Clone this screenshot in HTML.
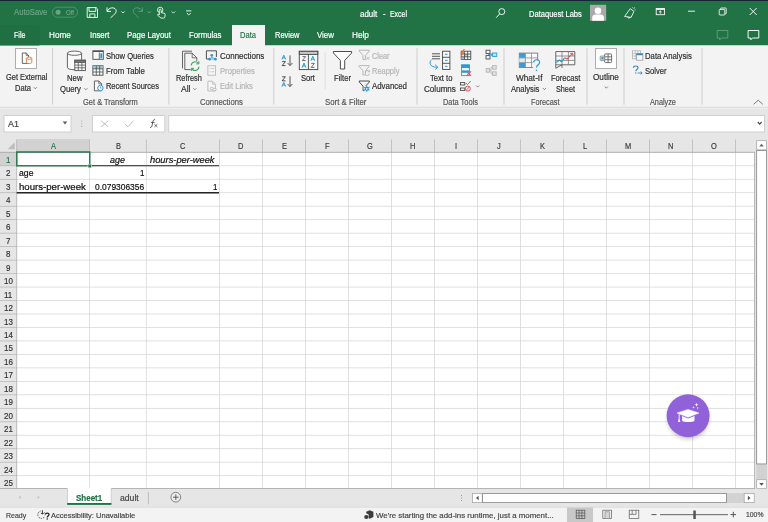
<!DOCTYPE html>
<html><head><meta charset="utf-8"><title>adult - Excel</title>
<style>
html,body{margin:0;padding:0;}
body{width:768px;height:522px;overflow:hidden;position:relative;background:#fff;
font-family:"Liberation Sans",sans-serif;}
.r{position:absolute;}
.t{position:absolute;white-space:pre;line-height:12px;transform-origin:0 50%;-webkit-text-stroke:0.18px currentColor;}
svg.ov{position:absolute;left:0;top:0;}
#tx{position:absolute;left:0;top:0;width:768px;height:522px;will-change:transform;}
</style></head><body>
<svg class="ov" width="768" height="522" viewBox="0 0 768 522">
<defs><linearGradient id="shade" x1="0" y1="0" x2="0" y2="1"><stop offset="0" stop-color="#dadada"/><stop offset="1" stop-color="#e6e6e6"/></linearGradient></defs>
<rect x="0.00" y="0.00" width="768.00" height="45.50" fill="#217346"/>
<rect x="0.00" y="0.00" width="768.00" height="1.00" fill="#152536"/>
<rect x="0.00" y="45.50" width="768.00" height="61.10" fill="#f3f3f3"/>
<rect x="0.00" y="106.60" width="768.00" height="1.80" fill="url(#shade)"/>
<rect x="0.00" y="25.00" width="39.50" height="20.50" fill="#1f6f43"/>
<rect x="232.00" y="25.00" width="33.00" height="21.00" fill="#f3f3f3"/>
<rect x="52.00" y="48.20" width="1.00" height="56.40" fill="#cecece"/>
<rect x="168.40" y="48.20" width="1.00" height="56.40" fill="#cecece"/>
<rect x="273.30" y="48.20" width="1.00" height="56.40" fill="#cecece"/>
<rect x="416.50" y="48.20" width="1.00" height="56.40" fill="#cecece"/>
<rect x="503.50" y="48.20" width="1.00" height="56.40" fill="#cecece"/>
<rect x="586.50" y="48.20" width="1.00" height="56.40" fill="#cecece"/>
<rect x="623.50" y="48.20" width="1.00" height="56.40" fill="#cecece"/>
<rect x="701.50" y="48.20" width="1.00" height="56.40" fill="#cecece"/>
<rect x="324.70" y="52.00" width="0.80" height="37.00" fill="#dadada"/>
<rect x="15.50" y="48.50" width="21.00" height="20.00" fill="#fefefe" stroke="#adadad" stroke-width="1.00"/>
<rect x="595.50" y="48.50" width="21.00" height="20.00" fill="#fefefe" stroke="#adadad" stroke-width="1.00"/>
<rect x="0.00" y="108.50" width="768.00" height="30.50" fill="#e6e6e6"/>
<rect x="4.00" y="115.50" width="67.00" height="16.50" fill="#fff" stroke="#d0d0d0" stroke-width="1.00"/>
<rect x="92.50" y="115.50" width="72.30" height="16.50" fill="#fff" stroke="#d0d0d0" stroke-width="1.00"/>
<rect x="168.70" y="115.50" width="595.80" height="16.50" fill="#fff" stroke="#d0d0d0" stroke-width="1.00"/>
<rect x="0.00" y="139.00" width="768.00" height="349.85" fill="#e6e6e6"/>
<rect x="16.80" y="152.30" width="737.80" height="336.55" fill="#fff"/>
<rect x="16.80" y="139.00" width="72.80" height="13.30" fill="#d2d2d2"/>
<rect x="0.00" y="152.30" width="16.80" height="13.47" fill="#d2d2d2"/>
<path d="M14.7 142.3 V149.3 H7.7 Z" fill="#bdbdbd"/>
<rect x="89.24" y="139.50" width="0.72" height="12.80" fill="#b4b4b4"/>
<rect x="89.24" y="152.30" width="0.72" height="336.55" fill="#d5d5d5"/>
<rect x="145.94" y="139.50" width="0.72" height="12.80" fill="#b4b4b4"/>
<rect x="145.94" y="152.30" width="0.72" height="336.55" fill="#d5d5d5"/>
<rect x="219.04" y="139.50" width="0.72" height="12.80" fill="#b4b4b4"/>
<rect x="219.04" y="152.30" width="0.72" height="336.55" fill="#d5d5d5"/>
<rect x="262.04" y="139.50" width="0.72" height="12.80" fill="#b4b4b4"/>
<rect x="262.04" y="152.30" width="0.72" height="336.55" fill="#d5d5d5"/>
<rect x="305.04" y="139.50" width="0.72" height="12.80" fill="#b4b4b4"/>
<rect x="305.04" y="152.30" width="0.72" height="336.55" fill="#d5d5d5"/>
<rect x="348.04" y="139.50" width="0.72" height="12.80" fill="#b4b4b4"/>
<rect x="348.04" y="152.30" width="0.72" height="336.55" fill="#d5d5d5"/>
<rect x="391.04" y="139.50" width="0.72" height="12.80" fill="#b4b4b4"/>
<rect x="391.04" y="152.30" width="0.72" height="336.55" fill="#d5d5d5"/>
<rect x="434.04" y="139.50" width="0.72" height="12.80" fill="#b4b4b4"/>
<rect x="434.04" y="152.30" width="0.72" height="336.55" fill="#d5d5d5"/>
<rect x="477.04" y="139.50" width="0.72" height="12.80" fill="#b4b4b4"/>
<rect x="477.04" y="152.30" width="0.72" height="336.55" fill="#d5d5d5"/>
<rect x="520.04" y="139.50" width="0.72" height="12.80" fill="#b4b4b4"/>
<rect x="520.04" y="152.30" width="0.72" height="336.55" fill="#d5d5d5"/>
<rect x="563.04" y="139.50" width="0.72" height="12.80" fill="#b4b4b4"/>
<rect x="563.04" y="152.30" width="0.72" height="336.55" fill="#d5d5d5"/>
<rect x="606.04" y="139.50" width="0.72" height="12.80" fill="#b4b4b4"/>
<rect x="606.04" y="152.30" width="0.72" height="336.55" fill="#d5d5d5"/>
<rect x="649.04" y="139.50" width="0.72" height="12.80" fill="#b4b4b4"/>
<rect x="649.04" y="152.30" width="0.72" height="336.55" fill="#d5d5d5"/>
<rect x="692.04" y="139.50" width="0.72" height="12.80" fill="#b4b4b4"/>
<rect x="692.04" y="152.30" width="0.72" height="336.55" fill="#d5d5d5"/>
<rect x="735.04" y="139.50" width="0.72" height="12.80" fill="#b4b4b4"/>
<rect x="735.04" y="152.30" width="0.72" height="336.55" fill="#d5d5d5"/>
<rect x="0.00" y="165.41" width="16.80" height="0.72" fill="#b4b4b4"/>
<rect x="16.80" y="165.41" width="737.80" height="0.72" fill="#d5d5d5"/>
<rect x="0.00" y="178.89" width="16.80" height="0.72" fill="#b4b4b4"/>
<rect x="16.80" y="178.89" width="737.80" height="0.72" fill="#d5d5d5"/>
<rect x="0.00" y="192.36" width="16.80" height="0.72" fill="#b4b4b4"/>
<rect x="16.80" y="192.36" width="737.80" height="0.72" fill="#d5d5d5"/>
<rect x="0.00" y="205.84" width="16.80" height="0.72" fill="#b4b4b4"/>
<rect x="16.80" y="205.84" width="737.80" height="0.72" fill="#d5d5d5"/>
<rect x="0.00" y="219.31" width="16.80" height="0.72" fill="#b4b4b4"/>
<rect x="16.80" y="219.31" width="737.80" height="0.72" fill="#d5d5d5"/>
<rect x="0.00" y="232.78" width="16.80" height="0.72" fill="#b4b4b4"/>
<rect x="16.80" y="232.78" width="737.80" height="0.72" fill="#d5d5d5"/>
<rect x="0.00" y="246.26" width="16.80" height="0.72" fill="#b4b4b4"/>
<rect x="16.80" y="246.26" width="737.80" height="0.72" fill="#d5d5d5"/>
<rect x="0.00" y="259.73" width="16.80" height="0.72" fill="#b4b4b4"/>
<rect x="16.80" y="259.73" width="737.80" height="0.72" fill="#d5d5d5"/>
<rect x="0.00" y="273.21" width="16.80" height="0.72" fill="#b4b4b4"/>
<rect x="16.80" y="273.21" width="737.80" height="0.72" fill="#d5d5d5"/>
<rect x="0.00" y="286.68" width="16.80" height="0.72" fill="#b4b4b4"/>
<rect x="16.80" y="286.68" width="737.80" height="0.72" fill="#d5d5d5"/>
<rect x="0.00" y="300.15" width="16.80" height="0.72" fill="#b4b4b4"/>
<rect x="16.80" y="300.15" width="737.80" height="0.72" fill="#d5d5d5"/>
<rect x="0.00" y="313.63" width="16.80" height="0.72" fill="#b4b4b4"/>
<rect x="16.80" y="313.63" width="737.80" height="0.72" fill="#d5d5d5"/>
<rect x="0.00" y="327.10" width="16.80" height="0.72" fill="#b4b4b4"/>
<rect x="16.80" y="327.10" width="737.80" height="0.72" fill="#d5d5d5"/>
<rect x="0.00" y="340.58" width="16.80" height="0.72" fill="#b4b4b4"/>
<rect x="16.80" y="340.58" width="737.80" height="0.72" fill="#d5d5d5"/>
<rect x="0.00" y="354.05" width="16.80" height="0.72" fill="#b4b4b4"/>
<rect x="16.80" y="354.05" width="737.80" height="0.72" fill="#d5d5d5"/>
<rect x="0.00" y="367.52" width="16.80" height="0.72" fill="#b4b4b4"/>
<rect x="16.80" y="367.52" width="737.80" height="0.72" fill="#d5d5d5"/>
<rect x="0.00" y="381.00" width="16.80" height="0.72" fill="#b4b4b4"/>
<rect x="16.80" y="381.00" width="737.80" height="0.72" fill="#d5d5d5"/>
<rect x="0.00" y="394.47" width="16.80" height="0.72" fill="#b4b4b4"/>
<rect x="16.80" y="394.47" width="737.80" height="0.72" fill="#d5d5d5"/>
<rect x="0.00" y="407.95" width="16.80" height="0.72" fill="#b4b4b4"/>
<rect x="16.80" y="407.95" width="737.80" height="0.72" fill="#d5d5d5"/>
<rect x="0.00" y="421.42" width="16.80" height="0.72" fill="#b4b4b4"/>
<rect x="16.80" y="421.42" width="737.80" height="0.72" fill="#d5d5d5"/>
<rect x="0.00" y="434.89" width="16.80" height="0.72" fill="#b4b4b4"/>
<rect x="16.80" y="434.89" width="737.80" height="0.72" fill="#d5d5d5"/>
<rect x="0.00" y="448.37" width="16.80" height="0.72" fill="#b4b4b4"/>
<rect x="16.80" y="448.37" width="737.80" height="0.72" fill="#d5d5d5"/>
<rect x="0.00" y="461.84" width="16.80" height="0.72" fill="#b4b4b4"/>
<rect x="16.80" y="461.84" width="737.80" height="0.72" fill="#d5d5d5"/>
<rect x="0.00" y="475.32" width="16.80" height="0.72" fill="#b4b4b4"/>
<rect x="16.80" y="475.32" width="737.80" height="0.72" fill="#d5d5d5"/>
<rect x="16.44" y="139.50" width="0.72" height="349.35" fill="#a8a8a8"/>
<rect x="0.00" y="151.85" width="755.00" height="0.90" fill="#a8a8a8"/>
<rect x="754.24" y="152.30" width="0.81" height="336.55" fill="#a8a8a8"/>
<rect x="89.70" y="165.17" width="129.30" height="1.10" fill="#333"/>
<rect x="16.70" y="192.02" width="202.30" height="1.50" fill="#222"/>
<rect x="16.80" y="152.00" width="73.00" height="13.82" fill="none" stroke="#217346" stroke-width="1.40"/>
<rect x="87.70" y="163.90" width="4.20" height="4.10" fill="#fff"/>
<rect x="88.25" y="164.45" width="3.10" height="3.05" fill="#217346"/>
<rect x="756.70" y="140.65" width="9.85" height="9.15" fill="#fff" stroke="#a8a8a8" stroke-width="0.80"/>
<rect x="756.30" y="464.00" width="10.65" height="15.60" fill="#d2d2d2"/>
<rect x="756.67" y="150.43" width="9.90" height="313.50" fill="#fff" stroke="#7e7e7e" stroke-width="0.75"/>
<rect x="756.70" y="479.70" width="9.85" height="8.80" fill="#fff" stroke="#a8a8a8" stroke-width="0.80"/>
<rect x="0.00" y="488.85" width="768.00" height="18.35" fill="#e6e6e6"/>
<rect x="0.00" y="488.10" width="755.00" height="0.85" fill="#a8a8a8"/>
<rect x="67.40" y="487.95" width="43.80" height="17.05" fill="#fff"/>
<rect x="67.10" y="488.65" width="0.70" height="14.75" fill="#c2c2c2"/>
<rect x="110.80" y="488.65" width="0.70" height="14.75" fill="#c2c2c2"/>
<rect x="67.10" y="503.00" width="44.40" height="1.90" fill="#217346"/>
<rect x="147.90" y="491.90" width="0.70" height="12.40" fill="#ababab"/>
<rect x="472.40" y="493.50" width="9.80" height="9.10" fill="#fff" stroke="#a8a8a8" stroke-width="0.80"/>
<rect x="726.50" y="493.10" width="17.50" height="9.90" fill="#d2d2d2"/>
<rect x="482.68" y="493.48" width="243.75" height="9.15" fill="#fff" stroke="#7e7e7e" stroke-width="0.75"/>
<rect x="744.20" y="493.50" width="10.00" height="9.10" fill="#fff" stroke="#a8a8a8" stroke-width="0.80"/>
<rect x="461.00" y="495.00" width="1.00" height="1.00" fill="#9a9a9a"/>
<rect x="461.00" y="497.50" width="1.00" height="1.00" fill="#9a9a9a"/>
<rect x="461.00" y="500.00" width="1.00" height="1.00" fill="#9a9a9a"/>
<rect x="0.00" y="507.20" width="768.00" height="14.80" fill="#f3f3f3"/>
<rect x="0.00" y="506.80" width="768.00" height="0.80" fill="#d8d8d8"/>
<rect x="567.00" y="507.50" width="26.00" height="14.50" fill="#c8c8c8"/>
<rect x="660.00" y="514.00" width="68.00" height="1.20" fill="#7c7c7c"/>
<rect x="693.30" y="510.50" width="2.50" height="8.50" fill="#555"/>
<rect x="651.50" y="514.10" width="5.00" height="1.00" fill="#555"/>
<rect x="730.50" y="514.10" width="5.50" height="1.00" fill="#555"/>
<rect x="732.80" y="511.80" width="1.00" height="5.60" fill="#555"/>
</svg>
<svg class="ov" width="768" height="522" viewBox="0 0 768 522">
<rect x="52.40" y="7.20" width="25.20" height="10.00" rx="5" fill="none" stroke="#5b9a7a" stroke-width="0.8" />
<circle cx="58.10" cy="12.20" r="2.50" fill="#6aa384" stroke="none" stroke-width="0"/>
<path d="M87.2 7.6 H96.2 L97.5 8.9 V17.4 H87.2 Z" fill="none" stroke="#ffffff" stroke-width="0.9" stroke-linejoin="round"/>
<path d="M89 7.6 V11.4 H95.8 V7.6" fill="none" stroke="#ffffff" stroke-width="0.9" />
<path d="M89.8 17.4 V13.9 H94.9 V17.4" fill="none" stroke="#ffffff" stroke-width="0.9" />
<path d="M107 7.4 V11.4 H111" fill="none" stroke="#ffffff" stroke-width="0.95" stroke-linejoin="miter"/>
<path d="M107.2 11.2 C109 7.6 114 6.6 115.8 9.6 C117.2 12 115 14 110.6 17.8" fill="none" stroke="#ffffff" stroke-width="0.95" />
<path d="M121.40 11.40 L123.00 13.00 L124.60 11.40" fill="none" stroke="#ffffff" stroke-width="0.8" />
<path d="M142.4 7.4 V11.4 H138.4" fill="none" stroke="#7fb095" stroke-width="0.9" opacity="0.7"/>
<path d="M142.2 11.2 C140.4 7.6 135.4 6.6 133.6 9.6 C132.2 12 134.4 14 138.8 17.8" fill="none" stroke="#7fb095" stroke-width="0.9" opacity="0.7"/>
<path d="M147.70 11.40 L149.30 13.00 L150.90 11.40" fill="none" stroke="#7fb095" stroke-width="0.8" />
<circle cx="160.20" cy="9.90" r="2.70" fill="none" stroke="#ffffff" stroke-width="0.85"/>
<path d="M159.3 15 V10.2 a0.95 0.95 0 0 1 1.9 0 V12.6 L164.2 13.3 a1.2 1.2 0 0 1 1 1.3 L164.8 17.2 a1.2 1.2 0 0 1 -1.2 0.9 H161 L157.6 15.2 a0.8 0.8 0 0 1 1.2 -0.9 Z" fill="#217346" stroke="#ffffff" stroke-width="0.85" stroke-linejoin="round"/>
<path d="M171.70 11.45 L173.40 13.15 L175.10 11.45" fill="none" stroke="#ffffff" stroke-width="0.8" />
<path d="M186.1 10.9 H191.4" fill="none" stroke="#ffffff" stroke-width="0.9" />
<path d="M186.85 13.05 L188.75 14.95 L190.65 13.05" fill="none" stroke="#ffffff" stroke-width="0.9" />
<circle cx="501.80" cy="11.60" r="3.00" fill="none" stroke="#ffffff" stroke-width="0.9"/>
<path d="M499.6 13.9 L496.2 17.7" fill="none" stroke="#ffffff" stroke-width="0.95" />
<rect x="590.00" y="4.80" width="16.20" height="16.00" rx="0" fill="#a9a9a9" stroke="none" stroke-width="0" />
<circle cx="598.00" cy="10.70" r="3.30" fill="#fff" stroke="none" stroke-width="0"/>
<path d="M592.2 20.8 V17.6 C592.2 15.6 593.8 14.6 595.4 14.6 H600.6 C602.4 14.6 603.9 15.6 603.9 17.6 V20.8 Z" fill="#fff" stroke="none" stroke-width="0" />
<path d="M624.6 16.5 L630.2 8.7 L633.9 11.4 L631.2 17.3 Z" fill="none" stroke="#ffffff" stroke-width="0.85" stroke-linejoin="round"/>
<path d="M627.6 16.9 L628.4 18.1 L630.4 17.6" fill="none" stroke="#ffffff" stroke-width="0.8" stroke-linejoin="round"/>
<path d="M632.6 7.4 L633.2 8.4 M634.6 7.4 L634.2 8.6 M635.6 9.8 L634.6 10.1" fill="none" stroke="#ffffff" stroke-width="0.75" />
<rect x="656.20" y="8.50" width="8.30" height="6.20" rx="0" fill="none" stroke="#ffffff" stroke-width="0.85" />
<path d="M656.2 9.3 H664.5" fill="none" stroke="#ffffff" stroke-width="1.1" />
<path d="M660.35 13.6 V11 M659 12.2 L660.35 10.9 L661.7 12.2" fill="none" stroke="#ffffff" stroke-width="0.8" />
<path d="M688 11.2 H695" fill="none" stroke="#ffffff" stroke-width="0.9" />
<rect x="719.20" y="9.40" width="5.60" height="5.60" rx="0.8" fill="none" stroke="#ffffff" stroke-width="0.85" />
<path d="M720.6 9.3 V8.6 a0.6 0.6 0 0 1 0.6 -0.6 H725.6 a0.6 0.6 0 0 1 0.6 0.6 V13.2 a0.6 0.6 0 0 1 -0.6 0.6 H725" fill="none" stroke="#ffffff" stroke-width="0.85" />
<path d="M749.7 8 L756.7 15 M756.7 8 L749.7 15" fill="none" stroke="#ffffff" stroke-width="0.95" />
<path d="M717.2 30.5 H727.8 V38 H721.4 L719.8 39.8 V38 H717.2 Z" fill="none" stroke="#7fb095" stroke-width="0.85" opacity="0.75"/>
<path d="M748.1 30.5 H758.8 V38 H752.4 L750.8 39.8 V38 H748.1 Z" fill="none" stroke="#ffffff" stroke-width="0.95" />
<path d="M22.3 53 H26.2 L28.6 55.4 V63.4 H22.3 Z" fill="none" stroke="#4a4a4a" stroke-width="0.85" stroke-linejoin="round"/>
<path d="M26.2 53 V55.4 H28.6" fill="none" stroke="#4a4a4a" stroke-width="0.7" />
<path d="M26.4 58.2 V62.6 C26.4 63.8 31.8 63.8 31.8 62.6 V58.2" fill="#fdfdfd" stroke="#e9783c" stroke-width="0.9" />
<ellipse cx="29.10" cy="58.20" rx="2.70" ry="1.10" fill="#fdfdfd" stroke="#e9783c" stroke-width="0.9"/>
<path d="M33.80 87.25 L35.30 88.75 L36.80 87.25" fill="none" stroke="#666" stroke-width="0.8" />
<path d="M67.4 53.2 V67.6 C67.4 70.4 81.6 70.4 81.6 67.6 V53.2" fill="#fafafa" stroke="#555" stroke-width="0.9" />
<ellipse cx="74.50" cy="53.20" rx="7.10" ry="2.10" fill="#fafafa" stroke="#555" stroke-width="0.9"/>
<rect x="74.80" y="60.20" width="10.60" height="10.40" rx="0" fill="#fafafa" stroke="#555" stroke-width="0.9" />
<rect x="74.80" y="60.20" width="10.60" height="2.20" rx="0" fill="#777" stroke="#555" stroke-width="0.9" />
<path d="M78.3 62.4 V70.6 M81.9 62.4 V70.6 M74.8 65.1 H85.4 M74.8 67.8 H85.4" fill="none" stroke="#555" stroke-width="0.8" />
<path d="M84.40 88.25 L85.90 89.75 L87.40 88.25" fill="none" stroke="#666" stroke-width="0.8" />
<rect x="92.90" y="50.80" width="10.40" height="8.50" rx="0" fill="#fafafa" stroke="#4a4a4a" stroke-width="0.9" />
<path d="M92.9 51.4 H103.3" fill="none" stroke="#4a4a4a" stroke-width="1.1" />
<path d="M99.3 52.4 V59.3" fill="none" stroke="#4a4a4a" stroke-width="0.8" />
<rect x="100.30" y="53.40" width="2.00" height="4.80" rx="0" fill="#2a9bd7" stroke="none" stroke-width="0" />
<rect x="92.90" y="65.80" width="10.10" height="9.40" rx="0" fill="#fafafa" stroke="#4a4a4a" stroke-width="0.9" />
<rect x="93.40" y="66.30" width="9.10" height="2.30" rx="0" fill="#8ccbea" stroke="none" stroke-width="0" />
<path d="M92.9 68.8 H103 M92.9 72 H103 M96.3 65.8 V75.2 M99.7 65.8 V75.2" fill="none" stroke="#4a4a4a" stroke-width="0.8" />
<path d="M94.4 81 H98.8 L101.6 83.8 V90.8 H94.4 Z" fill="#fafafa" stroke="#4a4a4a" stroke-width="0.85" stroke-linejoin="round"/>
<path d="M98.8 81 V83.8 H101.6" fill="none" stroke="#4a4a4a" stroke-width="0.7" />
<circle cx="100.40" cy="88.00" r="2.70" fill="#fff" stroke="#2a9bd7" stroke-width="1.0"/>
<path d="M100.4 86.4 V88.1 H101.8" fill="none" stroke="#2a9bd7" stroke-width="0.7" />
<path d="M182.5 68.4 V51.2 H192" fill="none" stroke="#555" stroke-width="0.9" />
<path d="M184.8 69.6 V53.2 H192.2 L196.8 57.8 V61" fill="none" stroke="#555" stroke-width="0.9" stroke-linejoin="round"/>
<path d="M192.2 53.2 V57.8 H196.8" fill="none" stroke="#555" stroke-width="0.8" />
<path d="M184.8 69.6 H190.6" fill="none" stroke="#555" stroke-width="0.9" />
<path d="M191.2 65.4 A4 4 0 0 1 198.4 63.4" fill="none" stroke="#3ba55c" stroke-width="1.1" />
<path d="M198.9 61.2 V63.9 H196.2" fill="none" stroke="#3ba55c" stroke-width="1.0" />
<path d="M199 66.8 A4 4 0 0 1 191.8 68.8" fill="none" stroke="#3ba55c" stroke-width="1.1" />
<path d="M191.3 71 V68.3 H194" fill="none" stroke="#3ba55c" stroke-width="1.0" />
<path d="M193.30 88.25 L194.80 89.75 L196.30 88.25" fill="none" stroke="#666" stroke-width="0.8" />
<path d="M209 59 H206.4 V50.8 H216.4 V57" fill="none" stroke="#4a4a4a" stroke-width="0.95" />
<path d="M211.8 55.4 V57.6 M209.6 59.1 H215.4 M211.8 57.4 L209.8 58.8 M211.8 57.4 L215.2 58.8" fill="none" stroke="#2a9bd7" stroke-width="0.7" />
<circle cx="211.80" cy="55.30" r="1.35" fill="#2a9bd7" stroke="none" stroke-width="0"/>
<circle cx="209.60" cy="59.20" r="1.35" fill="#2a9bd7" stroke="none" stroke-width="0"/>
<circle cx="215.40" cy="59.20" r="1.35" fill="#2a9bd7" stroke="none" stroke-width="0"/>
<rect x="207.90" y="65.80" width="7.70" height="9.40" rx="0" fill="#f7f7f7" stroke="#b4b4b4" stroke-width="0.85" />
<path d="M209.4 68.6 H210.4 M211.4 68.6 H214.2 M209.4 71.8 H210.4 M211.4 71.8 H214.2" fill="none" stroke="#b4b4b4" stroke-width="0.8" />
<path d="M207.9 81.2 H212.4 L215.4 84.2 V91 H207.9 Z" fill="#f7f7f7" stroke="#b4b4b4" stroke-width="0.85" stroke-linejoin="round"/>
<path d="M212.4 81.2 V84.2 H215.4" fill="none" stroke="#b4b4b4" stroke-width="0.7" />
<rect x="210.20" y="87.40" width="3.20" height="2.20" rx="1" fill="none" stroke="#b4b4b4" stroke-width="0.8" />
<rect x="212.60" y="88.40" width="3.60" height="2.20" rx="1" fill="#f3f3f3" stroke="#b4b4b4" stroke-width="0.8" />
<path d="M281.90 59.40 L283.80 55.20 L285.70 59.40 M282.66 57.89 H284.94" fill="none" stroke="#2a9bd7" stroke-width="1.0" stroke-linejoin="round"/>
<path d="M282.20 61.60 H285.40 L282.20 65.60 H285.50" fill="none" stroke="#444" stroke-width="0.95" />
<path d="M290 55.4 V65.4 M287.6 63 L290 65.6 L292.4 63" fill="none" stroke="#444" stroke-width="0.9" />
<path d="M282.20 76.80 H285.40 L282.20 80.80 H285.50" fill="none" stroke="#444" stroke-width="0.95" />
<path d="M281.90 86.60 L283.80 82.40 L285.70 86.60 M282.66 85.09 H284.94" fill="none" stroke="#2a9bd7" stroke-width="1.0" stroke-linejoin="round"/>
<path d="M290 76.2 V86.4 M287.6 84 L290 86.6 L292.4 84" fill="none" stroke="#444" stroke-width="0.9" />
<rect x="299.30" y="51.30" width="18.50" height="18.30" rx="0" fill="#fafafa" stroke="#444" stroke-width="0.9" />
<rect x="299.30" y="51.30" width="18.50" height="3.10" rx="0" fill="#c8c8c8" stroke="#444" stroke-width="0.9" />
<path d="M308.4 54.4 V69.6" fill="none" stroke="#444" stroke-width="0.9" />
<path d="M302.40 56.60 H305.60 L302.40 60.60 H305.70" fill="none" stroke="#555" stroke-width="0.85" />
<path d="M302.10 67.60 L304.00 63.00 L305.90 67.60 M302.86 65.94 H305.14" fill="none" stroke="#2a9bd7" stroke-width="1.0" stroke-linejoin="round"/>
<path d="M310.90 60.80 L312.80 56.20 L314.70 60.80 M311.66 59.14 H313.94" fill="none" stroke="#2a9bd7" stroke-width="1.0" stroke-linejoin="round"/>
<path d="M311.20 63.40 H314.40 L311.20 67.40 H314.50" fill="none" stroke="#555" stroke-width="0.85" />
<path d="M333.4 51.5 H351.6 V53 L344.7 60.4 V69 H340.4 V60.4 L333.4 53 Z" fill="#fdfdfd" stroke="#444" stroke-width="0.95" stroke-linejoin="round"/>
<path d="M359.2 50.2 H369.2 V51.2 L365.4 55.4 V59.6 H363 V55.4 L359.2 51.2 Z" fill="none" stroke="#b4b4b4" stroke-width="0.95" stroke-linejoin="round"/>
<path d="M366.4 56.8 L369.4 59.8 M369.4 56.8 L366.4 59.8" fill="none" stroke="#b4b4b4" stroke-width="0.9" />
<path d="M359.2 65.6 H369.2 V66.6 L365.4 70.8 V75 H363 V70.8 L359.2 66.6 Z" fill="none" stroke="#b4b4b4" stroke-width="0.95" stroke-linejoin="round"/>
<path d="M365.2 72.2 A2.2 2.2 0 0 1 369.3 71.6 M369.5 73.6 A2.2 2.2 0 0 1 365.4 74.4 M369.4 70.2 V71.8 H367.8" fill="none" stroke="#b4b4b4" stroke-width="0.9" />
<path d="M359.2 81 H369.4 V82 L365.5 86.2 V90.6 H363.1 V86.2 L359.2 82 Z" fill="none" stroke="#444" stroke-width="0.95" stroke-linejoin="round"/>
<circle cx="366.80" cy="88.80" r="3.10" fill="#f3f3f3" stroke="none" stroke-width="0"/>
<path d="M366.8 85.8 V91.8 M364.2 87.3 L369.4 90.3 M364.2 90.3 L369.4 87.3" fill="none" stroke="#2a9bd7" stroke-width="1.15" />
<circle cx="366.80" cy="88.80" r="2.00" fill="#2a9bd7" stroke="none" stroke-width="0"/>
<circle cx="366.80" cy="88.80" r="0.85" fill="#f3f3f3" stroke="none" stroke-width="0"/>
<path d="M432 53.8 H440 M432 56.3 H440 M432 58.8 H440" fill="none" stroke="#444" stroke-width="0.9" />
<path d="M431.6 59.6 C428.6 62 429.6 67.4 437.2 67.2" fill="none" stroke="#2a9bd7" stroke-width="1.0" />
<path d="M435.2 64.8 L437.8 67.2 L435.2 69.6" fill="none" stroke="#2a9bd7" stroke-width="1.0" />
<rect x="442.60" y="51.20" width="7.30" height="18.20" rx="0" fill="#fafafa" stroke="#444" stroke-width="0.9" />
<path d="M442.6 57.3 H449.9 M442.6 63.3 H449.9" fill="none" stroke="#444" stroke-width="0.9" />
<path d="M445 54.3 H447.6 M445 60.3 H447.6 M445 66.3 H447.6" fill="none" stroke="#2a9bd7" stroke-width="1.0" />
<rect x="461.20" y="51.20" width="9.60" height="8.20" rx="0" fill="#fafafa" stroke="#444" stroke-width="0.85" />
<rect x="464.60" y="54.00" width="3.00" height="2.80" rx="0" fill="#8ccbea" stroke="none" stroke-width="0" />
<rect x="461.40" y="56.80" width="3.00" height="2.40" rx="0" fill="#8ccbea" stroke="none" stroke-width="0" />
<path d="M464.5 51.2 V59.4 M467.7 51.2 V59.4 M461.2 54 H470.8 M461.2 56.8 H470.8" fill="none" stroke="#444" stroke-width="0.8" />
<path d="M463.6 49.2 L460.4 53.6 H462.4 L461 56.6 L465 52.2 H462.8 L464.8 49.2 Z" fill="#e9783c" stroke="#e9783c" stroke-width="0.3" />
<rect x="461.60" y="65.00" width="7.80" height="10.60" rx="0" fill="#fafafa" stroke="#2a9bd7" stroke-width="0.9" />
<rect x="461.60" y="65.00" width="7.80" height="2.60" rx="0" fill="#2a9bd7" stroke="#2a9bd7" stroke-width="0.9" />
<rect x="461.60" y="70.40" width="7.80" height="2.40" rx="0" fill="#2a9bd7" stroke="none" stroke-width="0" />
<path d="M466.6 71.4 L471 75.8 M471 71.4 L466.6 75.8" fill="none" stroke="#e8525f" stroke-width="1.1" />
<rect x="460.40" y="82.60" width="4.40" height="2.40" rx="0" fill="none" stroke="#444" stroke-width="0.85" />
<rect x="460.40" y="88.00" width="4.40" height="2.40" rx="0" fill="none" stroke="#444" stroke-width="0.85" />
<path d="M465.8 83 L467.4 84.6 L470.8 81" fill="none" stroke="#3ba55c" stroke-width="1.0" />
<circle cx="467.80" cy="88.60" r="2.50" fill="none" stroke="#e8525f" stroke-width="1.0"/>
<path d="M466.1 90.3 L469.5 86.9" fill="none" stroke="#e8525f" stroke-width="0.9" />
<path d="M476.20 85.55 L477.70 87.05 L479.20 85.55" fill="none" stroke="#666" stroke-width="0.8" />
<rect x="486.00" y="50.20" width="4.00" height="3.40" rx="0" fill="none" stroke="#444" stroke-width="0.85" />
<rect x="486.00" y="55.60" width="4.00" height="3.40" rx="0" fill="none" stroke="#444" stroke-width="0.85" />
<path d="M488 54.6 H492 M490.6 53.2 L492.2 54.6 L490.6 56" fill="none" stroke="#2a9bd7" stroke-width="0.9" />
<rect x="492.60" y="53.00" width="4.20" height="3.40" rx="0" fill="#bfe3f5" stroke="#2a9bd7" stroke-width="0.9" />
<rect x="486.20" y="68.40" width="3.40" height="3.80" rx="0" fill="#e0e0e0" stroke="#b4b4b4" stroke-width="0.85" />
<rect x="492.40" y="65.60" width="3.80" height="3.60" rx="0" fill="#e0e0e0" stroke="#b4b4b4" stroke-width="0.85" />
<rect x="492.40" y="71.80" width="3.80" height="3.60" rx="0" fill="#e0e0e0" stroke="#b4b4b4" stroke-width="0.85" />
<path d="M489.6 70.3 H491 V67.4 H492.4 M491 70.3 V73.6 H492.4" fill="none" stroke="#b4b4b4" stroke-width="0.8" />
<rect x="519.30" y="53.10" width="18.40" height="14.30" rx="0" fill="#fafafa" stroke="#777" stroke-width="0.9" />
<rect x="519.30" y="53.10" width="6.10" height="4.80" rx="0" fill="#3f9bd6" stroke="none" stroke-width="0" />
<rect x="519.30" y="62.60" width="6.10" height="4.80" rx="0" fill="#3f9bd6" stroke="none" stroke-width="0" />
<rect x="519.30" y="57.90" width="6.10" height="4.70" rx="0" fill="#d6ebf7" stroke="none" stroke-width="0" />
<path d="M525.4 53.1 V67.4 M531.5 53.1 V67.4 M519.3 57.9 H537.7 M519.3 62.6 H537.7" fill="none" stroke="#8a8a8a" stroke-width="0.8" />
<circle cx="536.60" cy="64.80" r="4.60" fill="#f3f3f3" stroke="none" stroke-width="0"/>
<path d="M533.6 62.6 C533.6 58.8 539.6 58.8 539.6 62.4 C539.6 64.8 536.4 64.8 536.5 67.6" fill="none" stroke="#2a9bd7" stroke-width="1.2" />
<circle cx="536.50" cy="70.20" r="0.80" fill="#2a9bd7" stroke="none" stroke-width="0"/>
<path d="M542.90 88.15 L544.40 89.65 L545.90 88.15" fill="none" stroke="#666" stroke-width="0.8" />
<path d="M555.8 51.6 H574.8 V64.8 H562 L555.8 68.2 Z" fill="#fafafa" stroke="#555" stroke-width="0.9" stroke-linejoin="round"/>
<path d="M555.8 64.8 H562 V68 " fill="none" stroke="#555" stroke-width="0.8" />
<path d="M562 51.6 V64.8 M568.4 51.6 V64.8 M555.8 56 H574.8 M555.8 60.4 H574.8" fill="none" stroke="#777" stroke-width="0.8" />
<path d="M556.4 62.6 L559.4 60 L561.4 61.8 L564.6 57.8" fill="none" stroke="#2a9bd7" stroke-width="1.1" stroke-linejoin="round"/>
<path d="M564.6 57.8 L567 59 L572.6 53.6" fill="none" stroke="#e8525f" stroke-width="1.1" stroke-linejoin="round"/>
<path d="M570.2 53.4 H572.9 V56" fill="none" stroke="#e8525f" stroke-width="1.0" />
<rect x="604.60" y="53.90" width="7.00" height="8.70" rx="1" fill="#fafafa" stroke="#555" stroke-width="0.85" />
<path d="M604.6 56.8 H611.6 M604.6 59.7 H611.6 M608.1 53.9 V62.6" fill="none" stroke="#555" stroke-width="0.8" />
<rect x="600.20" y="56.00" width="4.40" height="4.60" rx="0.8" fill="#d9d9d9" stroke="#888" stroke-width="0.8" />
<rect x="601.40" y="57.20" width="2.20" height="2.20" rx="0" fill="#2a9bd7" stroke="none" stroke-width="0" />
<path d="M604.70 86.50 L606.30 88.10 L607.90 86.50" fill="none" stroke="#666" stroke-width="0.8" />
<rect x="632.60" y="50.80" width="7.80" height="8.00" rx="0" fill="#fafafa" stroke="#b0b0b0" stroke-width="0.8" />
<path d="M635.2 50.8 V58.8 M637.8 50.8 V58.8 M632.6 53.4 H640.4 M632.6 56 H640.4" fill="none" stroke="#b0b0b0" stroke-width="0.7" />
<rect x="636.40" y="53.60" width="6.40" height="6.60" rx="0" fill="#fafafa" stroke="#9a9a9a" stroke-width="0.8" />
<rect x="636.40" y="53.60" width="6.40" height="1.60" rx="0" fill="#2f86c4" stroke="none" stroke-width="0" />
<path d="M633.4 67.8 C633.4 65.4 638 65.4 638 67.8 C638 69.4 635.8 69.4 635.8 71.2" fill="none" stroke="#2f86c4" stroke-width="1.15" />
<circle cx="635.80" cy="73.00" r="0.65" fill="#2f86c4" stroke="none" stroke-width="0"/>
<path d="M637.6 73 H642 M640.6 71.6 L642.2 73 L640.6 74.4" fill="none" stroke="#2f86c4" stroke-width="0.9" />
<path d="M753.6 104.3 L758.2 100.2 L762.8 104.3" fill="none" stroke="#666" stroke-width="0.85" />
<path d="M62.7 121.4 H67.3 L65 124.4 Z" fill="#5a5a5a" stroke="none" stroke-width="0" />
<circle cx="81.80" cy="121.00" r="0.55" fill="#9d9d9d" stroke="none" stroke-width="0"/>
<circle cx="81.80" cy="123.75" r="0.55" fill="#9d9d9d" stroke="none" stroke-width="0"/>
<circle cx="81.80" cy="126.40" r="0.55" fill="#9d9d9d" stroke="none" stroke-width="0"/>
<path d="M101.2 120.8 L108.2 126.8 M108.2 120.8 L101.2 126.8" fill="none" stroke="#b3b3b3" stroke-width="0.85" />
<path d="M125.2 124.2 L128 126.8 L133.6 120.6" fill="none" stroke="#b3b3b3" stroke-width="0.9" />
<path d="M150 127.4 C151.6 127.6 151.9 126.6 152.2 125 L153 121.2 C153.3 119.8 154 119.4 155.2 119.8 M150.9 122.4 H154.6" fill="none" stroke="#444" stroke-width="0.85" />
<path d="M154.4 124.2 L157.4 127 M157.4 124.2 L154.4 127" fill="none" stroke="#444" stroke-width="0.8" />
<path d="M757.8 122 L759.7 124.1 L761.6 122" fill="none" stroke="#444" stroke-width="1.15" />
<path d="M759.2 146.6 L761.5 143.8 L763.8 146.6 Z" fill="#666" stroke="none" stroke-width="0" />
<path d="M759.2 483 L761.5 485.8 L763.8 483 Z" fill="#555" stroke="none" stroke-width="0" />
<path d="M478.6 495.8 L476 498 L478.6 500.2 Z" fill="#555" stroke="none" stroke-width="0" />
<path d="M747.9 495.8 L750.5 498 L747.9 500.2 Z" fill="#555" stroke="none" stroke-width="0" />
<path d="M20.8 495.4 L18.6 497.2 L20.8 499 Z" fill="#c3c3c3" stroke="none" stroke-width="0" />
<path d="M37.6 495.4 L39.8 497.2 L37.6 499 Z" fill="#c3c3c3" stroke="none" stroke-width="0" />
<circle cx="175.80" cy="497.20" r="4.90" fill="#ebebeb" stroke="#6a6a6a" stroke-width="0.8"/>
<path d="M173 497.2 H178.6 M175.8 494.4 V500" fill="none" stroke="#555" stroke-width="0.9" />
<circle cx="41.50" cy="514.70" r="3.70" fill="none" stroke="#3a3a3a" stroke-width="0.85" stroke-dasharray="1.5 1.0"/>
<rect x="40.60" y="509.60" width="3.60" height="5.00" rx="0" fill="#f3f3f3" stroke="none" stroke-width="0" />
<path d="M42.4 510.2 V514.4 M40.9 513.4 H43.9" fill="none" stroke="#333" stroke-width="0.9" />
<circle cx="47.20" cy="516.20" r="2.60" fill="#f3f3f3" stroke="none" stroke-width="0"/>
<path d="M45.5 514.6 C45.5 512.6 49 512.6 49 514.6 C49 516 47.2 516 47.2 517.4" fill="none" stroke="#222" stroke-width="1.3" />
<circle cx="47.20" cy="519.00" r="0.75" fill="#222" stroke="none" stroke-width="0"/>
<path d="M366.2 511.8 L369.8 510.2 L373.4 511.8 V517 L369.8 518.8 L368.6 518.2 V514.4 L366.2 513.2 Z" fill="#3d3d3d" stroke="none" stroke-width="0" />
<circle cx="366.30" cy="517.00" r="2.10" fill="#3d3d3d" stroke="none" stroke-width="0"/>
<rect x="576.20" y="510.20" width="8.60" height="8.40" rx="0" fill="none" stroke="#555" stroke-width="0.75" />
<path d="M579.1 510.2 V518.6 M581.9 510.2 V518.6 M576.2 513 H584.8 M576.2 515.8 H584.8" fill="none" stroke="#555" stroke-width="0.7" />
<rect x="602.80" y="510.20" width="8.80" height="8.40" rx="0" fill="none" stroke="#666" stroke-width="0.75" />
<rect x="605.00" y="511.80" width="4.40" height="6.80" rx="0" fill="#d6d6d6" stroke="#888" stroke-width="0.7" />
<rect x="629.20" y="510.20" width="9.60" height="8.40" rx="0" fill="none" stroke="#666" stroke-width="0.75" />
<path d="M632.2 510.2 V514.4 H636 V510.2 M629.2 514.4 H632.2" fill="none" stroke="#666" stroke-width="0.75" />
<defs><filter id="fabs" x="-30%" y="-30%" width="160%" height="170%"><feGaussianBlur stdDeviation="2.2"/></filter></defs>
<ellipse cx="688.1" cy="418.6" rx="20.6" ry="20.4" fill="#000" opacity="0.22" filter="url(#fabs)"/>
<circle cx="688.10" cy="415.70" r="21.45" fill="#9061d9" stroke="none" stroke-width="0"/>
<path d="M677 413 L688.1 409.4 L698.9 413.1 L688.1 417.3 Z" fill="#fff" stroke="#fff" stroke-width="0.5" stroke-linejoin="round"/>
<path d="M682.1 416.1 L688.1 418.5 L694.5 416 V420.4 C694.5 422.4 682.1 422.4 682.1 420.4 Z" fill="#fff" stroke="none" stroke-width="0" />
<path d="M678.7 413.8 V418.4 L678 422.1 H680.3 L679.6 418.4 V413.8 Z" fill="#fff" stroke="none" stroke-width="0" />
<path d="M696.50 402.70 L697.06 404.14 L698.50 404.70 L697.06 405.26 L696.50 406.70 L695.94 405.26 L694.50 404.70 L695.94 404.14 Z" fill="#fff" stroke="none" stroke-width="0" />
<path d="M693.50 406.15 L693.85 407.05 L694.75 407.40 L693.85 407.75 L693.50 408.65 L693.15 407.75 L692.25 407.40 L693.15 407.05 Z" fill="#fff" stroke="none" stroke-width="0" />
<path d="M697.70 406.75 L698.05 407.65 L698.95 408.00 L698.05 408.35 L697.70 409.25 L697.35 408.35 L696.45 408.00 L697.35 407.65 Z" fill="#fff" stroke="none" stroke-width="0" />
</svg>
<div id="tx">
<span class="t" style="left:14.00px;top:6px;font-size:8.40px;color:#6fa487;transform:scaleX(0.9196)">AutoSave</span>
<span class="t" style="left:65.60px;top:7px;font-size:6.60px;color:#6fa487;transform:scaleX(0.9215)">Off</span>
<span class="t" style="left:360.40px;top:8px;font-size:8.40px;color:#fff;transform:scaleX(0.9442)">adult</span>
<span class="t" style="left:383.00px;top:8px;font-size:8.40px;color:#fff;transform:scaleX(0.8936)">-</span>
<span class="t" style="left:390.00px;top:8px;font-size:8.40px;color:#fff;transform:scaleX(0.8276)">Excel</span>
<span class="t" style="left:529.00px;top:8px;font-size:8.40px;color:#fff;transform:scaleX(0.9007)">Dataquest Labs</span>
<span class="t" style="left:14.00px;top:29px;font-size:8.40px;color:#fff;transform:scaleX(0.8496)">File</span>
<span class="t" style="left:49.00px;top:29px;font-size:8.40px;color:#fff;transform:scaleX(0.9818)">Home</span>
<span class="t" style="left:89.50px;top:29px;font-size:8.40px;color:#fff;transform:scaleX(0.9282)">Insert</span>
<span class="t" style="left:127.00px;top:29px;font-size:8.40px;color:#fff;transform:scaleX(0.9327)">Page Layout</span>
<span class="t" style="left:189.00px;top:29px;font-size:8.40px;color:#fff;transform:scaleX(0.9284)">Formulas</span>
<span class="t" style="left:240.00px;top:29px;font-size:8.40px;color:#217346;transform:scaleX(0.9017)">Data</span>
<span class="t" style="left:274.50px;top:29px;font-size:8.40px;color:#fff;transform:scaleX(0.8895)">Review</span>
<span class="t" style="left:317.00px;top:29px;font-size:8.40px;color:#fff;transform:scaleX(0.9415)">View</span>
<span class="t" style="left:352.00px;top:29px;font-size:8.40px;color:#fff;transform:scaleX(0.9840)">Help</span>
<span class="t" style="left:5.50px;top:71px;font-size:8.40px;color:#2e2e2e;transform:scaleX(0.8889)">Get External</span>
<span class="t" style="left:14.50px;top:82px;font-size:8.40px;color:#2e2e2e;transform:scaleX(0.9017)">Data</span>
<span class="t" style="left:67.00px;top:72px;font-size:8.40px;color:#2e2e2e;transform:scaleX(0.9224)">New</span>
<span class="t" style="left:59.50px;top:83px;font-size:8.40px;color:#2e2e2e;transform:scaleX(0.9180)">Query</span>
<span class="t" style="left:106.00px;top:50px;font-size:8.40px;color:#2e2e2e;transform:scaleX(0.9098)">Show Queries</span>
<span class="t" style="left:106.00px;top:65px;font-size:8.40px;color:#2e2e2e;transform:scaleX(0.9316)">From Table</span>
<span class="t" style="left:106.00px;top:80px;font-size:8.40px;color:#2e2e2e;transform:scaleX(0.8868)">Recent Sources</span>
<span class="t" style="left:83.00px;top:96px;font-size:8.40px;color:#555;transform:scaleX(0.8926)">Get &amp; Transform</span>
<span class="t" style="left:176.00px;top:72px;font-size:8.40px;color:#2e2e2e;transform:scaleX(0.8840)">Refresh</span>
<span class="t" style="left:181.00px;top:83px;font-size:8.40px;color:#2e2e2e;transform:scaleX(1.0176)">All</span>
<span class="t" style="left:219.50px;top:50px;font-size:8.40px;color:#2e2e2e;transform:scaleX(0.9529)">Connections</span>
<span class="t" style="left:219.50px;top:65px;font-size:8.40px;color:#b4b4b4;transform:scaleX(0.9142)">Properties</span>
<span class="t" style="left:219.50px;top:80px;font-size:8.40px;color:#b4b4b4;transform:scaleX(0.9061)">Edit Links</span>
<span class="t" style="left:200.00px;top:96px;font-size:8.40px;color:#555;transform:scaleX(0.9208)">Connections</span>
<span class="t" style="left:301.00px;top:72px;font-size:8.40px;color:#2e2e2e;transform:scaleX(0.9087)">Sort</span>
<span class="t" style="left:334.00px;top:72px;font-size:8.40px;color:#2e2e2e;transform:scaleX(0.9107)">Filter</span>
<span class="t" style="left:372.00px;top:50px;font-size:8.40px;color:#b4b4b4;transform:scaleX(0.8718)">Clear</span>
<span class="t" style="left:372.00px;top:65px;font-size:8.40px;color:#b4b4b4;transform:scaleX(0.8923)">Reapply</span>
<span class="t" style="left:372.00px;top:80px;font-size:8.40px;color:#2e2e2e;transform:scaleX(0.9368)">Advanced</span>
<span class="t" style="left:324.50px;top:96px;font-size:8.40px;color:#555;transform:scaleX(0.9359)">Sort &amp; Filter</span>
<span class="t" style="left:429.50px;top:72px;font-size:8.40px;color:#2e2e2e;transform:scaleX(0.9093)">Text to</span>
<span class="t" style="left:424.00px;top:83px;font-size:8.40px;color:#2e2e2e;transform:scaleX(0.9654)">Columns</span>
<span class="t" style="left:442.50px;top:96px;font-size:8.40px;color:#555;transform:scaleX(0.8853)">Data Tools</span>
<span class="t" style="left:515.50px;top:72px;font-size:8.40px;color:#2e2e2e;transform:scaleX(0.9789)">What-If</span>
<span class="t" style="left:511.00px;top:83px;font-size:8.40px;color:#2e2e2e;transform:scaleX(0.9111)">Analysis</span>
<span class="t" style="left:550.50px;top:72px;font-size:8.40px;color:#2e2e2e;transform:scaleX(0.9027)">Forecast</span>
<span class="t" style="left:556.00px;top:83px;font-size:8.40px;color:#2e2e2e;transform:scaleX(0.8655)">Sheet</span>
<span class="t" style="left:531.00px;top:96px;font-size:8.40px;color:#555;transform:scaleX(0.8721)">Forecast</span>
<span class="t" style="left:593.00px;top:71px;font-size:8.40px;color:#2e2e2e;transform:scaleX(0.9769)">Outline</span>
<span class="t" style="left:645.00px;top:50px;font-size:8.40px;color:#2e2e2e;transform:scaleX(0.9235)">Data Analysis</span>
<span class="t" style="left:645.00px;top:65px;font-size:8.40px;color:#2e2e2e;transform:scaleX(0.9030)">Solver</span>
<span class="t" style="left:650.00px;top:96px;font-size:8.40px;color:#555;transform:scaleX(0.8700)">Analyze</span>
<span class="t" style="left:8.00px;top:118px;font-size:8.30px;color:#444;transform:scaleX(1.0835)">A1</span>
<span class="t" style="left:50.91px;top:140px;font-size:8.90px;color:#217346;transform:scaleX(0.8400)">A</span>
<span class="t" style="left:115.66px;top:140px;font-size:8.90px;color:#3a3a3a;transform:scaleX(0.8400)">B</span>
<span class="t" style="left:180.35px;top:140px;font-size:8.90px;color:#3a3a3a;transform:scaleX(0.8400)">C</span>
<span class="t" style="left:238.40px;top:140px;font-size:8.90px;color:#3a3a3a;transform:scaleX(0.8400)">D</span>
<span class="t" style="left:281.61px;top:140px;font-size:8.90px;color:#3a3a3a;transform:scaleX(0.8400)">E</span>
<span class="t" style="left:324.82px;top:140px;font-size:8.90px;color:#3a3a3a;transform:scaleX(0.8400)">F</span>
<span class="t" style="left:367.19px;top:140px;font-size:8.90px;color:#3a3a3a;transform:scaleX(0.8400)">G</span>
<span class="t" style="left:410.40px;top:140px;font-size:8.90px;color:#3a3a3a;transform:scaleX(0.8400)">H</span>
<span class="t" style="left:455.06px;top:140px;font-size:8.90px;color:#3a3a3a;transform:scaleX(0.8400)">I</span>
<span class="t" style="left:497.23px;top:140px;font-size:8.90px;color:#3a3a3a;transform:scaleX(0.8400)">J</span>
<span class="t" style="left:539.61px;top:140px;font-size:8.90px;color:#3a3a3a;transform:scaleX(0.8400)">K</span>
<span class="t" style="left:583.02px;top:140px;font-size:8.90px;color:#3a3a3a;transform:scaleX(0.8400)">L</span>
<span class="t" style="left:624.99px;top:140px;font-size:8.90px;color:#3a3a3a;transform:scaleX(0.8400)">M</span>
<span class="t" style="left:668.40px;top:140px;font-size:8.90px;color:#3a3a3a;transform:scaleX(0.8400)">N</span>
<span class="t" style="left:711.19px;top:140px;font-size:8.90px;color:#3a3a3a;transform:scaleX(0.8400)">O</span>
<span class="t" style="left:6.27px;top:154px;font-size:8.90px;color:#217346;transform:scaleX(0.9000)">1</span>
<span class="t" style="left:6.27px;top:167px;font-size:8.90px;color:#333;transform:scaleX(0.9000)">2</span>
<span class="t" style="left:6.27px;top:181px;font-size:8.90px;color:#333;transform:scaleX(0.9000)">3</span>
<span class="t" style="left:6.27px;top:194px;font-size:8.90px;color:#333;transform:scaleX(0.9000)">4</span>
<span class="t" style="left:6.27px;top:208px;font-size:8.90px;color:#333;transform:scaleX(0.9000)">5</span>
<span class="t" style="left:6.27px;top:221px;font-size:8.90px;color:#333;transform:scaleX(0.9000)">6</span>
<span class="t" style="left:6.27px;top:235px;font-size:8.90px;color:#333;transform:scaleX(0.9000)">7</span>
<span class="t" style="left:6.27px;top:248px;font-size:8.90px;color:#333;transform:scaleX(0.9000)">8</span>
<span class="t" style="left:6.27px;top:262px;font-size:8.90px;color:#333;transform:scaleX(0.9000)">9</span>
<span class="t" style="left:4.05px;top:275px;font-size:8.90px;color:#333;transform:scaleX(0.9000)">10</span>
<span class="t" style="left:4.34px;top:289px;font-size:8.90px;color:#333;transform:scaleX(0.9000)">11</span>
<span class="t" style="left:4.05px;top:302px;font-size:8.90px;color:#333;transform:scaleX(0.9000)">12</span>
<span class="t" style="left:4.05px;top:316px;font-size:8.90px;color:#333;transform:scaleX(0.9000)">13</span>
<span class="t" style="left:4.05px;top:329px;font-size:8.90px;color:#333;transform:scaleX(0.9000)">14</span>
<span class="t" style="left:4.05px;top:342px;font-size:8.90px;color:#333;transform:scaleX(0.9000)">15</span>
<span class="t" style="left:4.05px;top:356px;font-size:8.90px;color:#333;transform:scaleX(0.9000)">16</span>
<span class="t" style="left:4.05px;top:369px;font-size:8.90px;color:#333;transform:scaleX(0.9000)">17</span>
<span class="t" style="left:4.05px;top:383px;font-size:8.90px;color:#333;transform:scaleX(0.9000)">18</span>
<span class="t" style="left:4.05px;top:396px;font-size:8.90px;color:#333;transform:scaleX(0.9000)">19</span>
<span class="t" style="left:4.05px;top:410px;font-size:8.90px;color:#333;transform:scaleX(0.9000)">20</span>
<span class="t" style="left:4.05px;top:423px;font-size:8.90px;color:#333;transform:scaleX(0.9000)">21</span>
<span class="t" style="left:4.05px;top:437px;font-size:8.90px;color:#333;transform:scaleX(0.9000)">22</span>
<span class="t" style="left:4.05px;top:450px;font-size:8.90px;color:#333;transform:scaleX(0.9000)">23</span>
<span class="t" style="left:4.05px;top:464px;font-size:8.90px;color:#333;transform:scaleX(0.9000)">24</span>
<span class="t" style="left:4.05px;top:477px;font-size:8.90px;color:#333;transform:scaleX(0.9000)">25</span>
<span class="t" style="left:110.00px;top:154px;font-size:8.90px;color:#0c0c0c;font-style:italic;transform:scaleX(1.0101)">age</span>
<span class="t" style="left:150.30px;top:154px;font-size:8.90px;color:#0c0c0c;font-style:italic;transform:scaleX(1.0491)">hours-per-week</span>
<span class="t" style="left:19.00px;top:167px;font-size:8.90px;color:#0c0c0c;transform:scaleX(0.9764)">age</span>
<span class="t" style="left:139.80px;top:167px;font-size:8.90px;color:#0c0c0c;transform:scaleX(0.8889)">1</span>
<span class="t" style="left:19.00px;top:181px;font-size:8.90px;color:#0c0c0c;transform:scaleX(1.0836)">hours-per-week</span>
<span class="t" style="left:95.00px;top:181px;font-size:8.90px;color:#0c0c0c;transform:scaleX(0.9486)">0.079306356</span>
<span class="t" style="left:212.50px;top:181px;font-size:8.90px;color:#0c0c0c;transform:scaleX(0.8889)">1</span>
<span class="t" style="left:75.60px;top:492px;font-size:8.40px;color:#217346;font-weight:700;transform:scaleX(0.9547)">Sheet1</span>
<span class="t" style="left:120.00px;top:492px;font-size:8.40px;color:#444;transform:scaleX(1.0321)">adult</span>
<span class="t" style="left:5.80px;top:510px;font-size:7.70px;color:#444;transform:scaleX(0.9075)">Ready</span>
<span class="t" style="left:50.60px;top:510px;font-size:7.70px;color:#444;transform:scaleX(0.9763)">Accessibility: Unavailable</span>
<span class="t" style="left:375.80px;top:510px;font-size:7.70px;color:#444;transform:scaleX(1.0217)">We're starting the add-ins runtime, just a moment...</span>
<span class="t" style="left:745.50px;top:509px;font-size:7.70px;color:#444;transform:scaleX(0.8886)">100%</span>
</div>
</body></html>
